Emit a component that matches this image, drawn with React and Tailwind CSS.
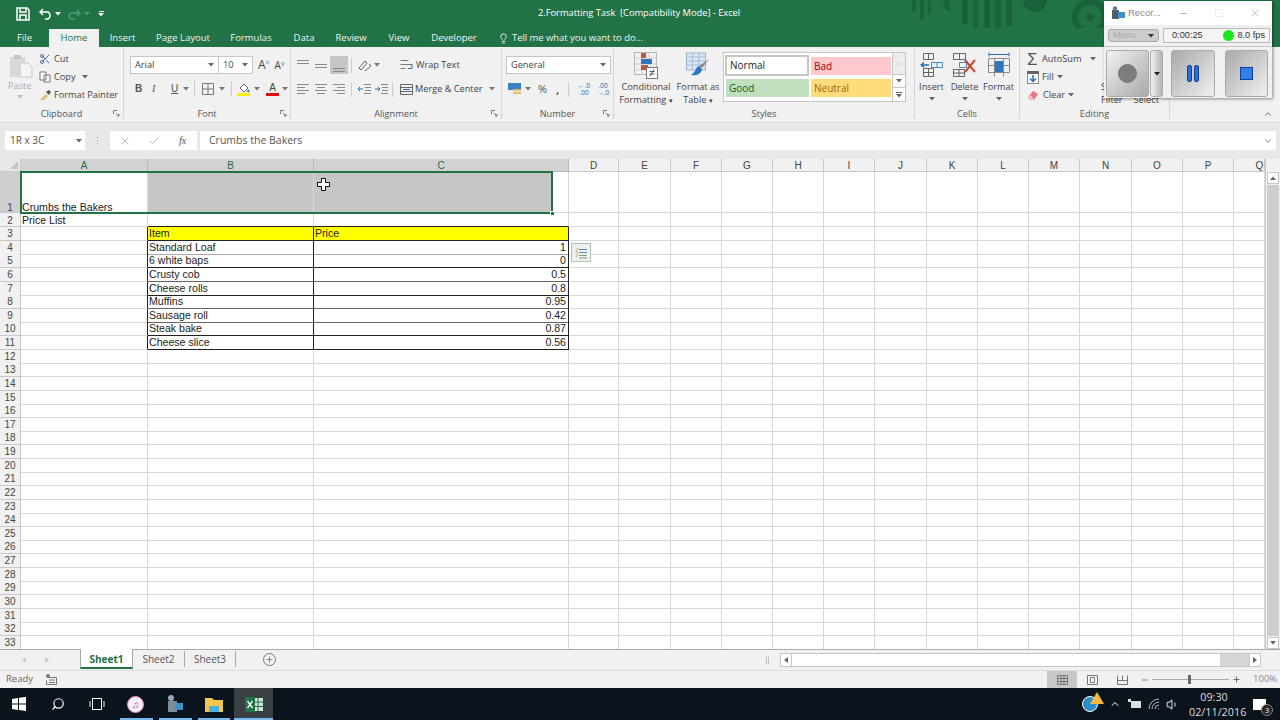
import React from 'react';
import { ChevronDown, ChevronUp, Check, X, Scissors, Search, Lightbulb, Plus, Minus, Volume1 } from 'lucide-react';

const cols = 'grid grid-cols-[21px_127px_166px_255px_50px_52px_51px_51px_51px_51px_52px_51px_51px_51px_52px_51px_51px_31px]';
const letters = ['A', 'B', 'C', 'D', 'E', 'F', 'G', 'H', 'I', 'J', 'K', 'L', 'M', 'N', 'O', 'P', 'Q'];

const table = {
  3: { b: 'Item', c: 'Price', line: 'border-b-[#222]', yellow: true },
  4: { b: 'Standard Loaf', c: '1', line: 'border-b-[#aaa]' },
  5: { b: '6 white baps', c: '0', line: 'border-b-[#222]' },
  6: { b: 'Crusty cob', c: '0.5', line: 'border-b-[#666]' },
  7: { b: 'Cheese rolls', c: '0.8', line: 'border-b-[#222]' },
  8: { b: 'Muffins', c: '0.95', line: 'border-b-[#666]' },
  9: { b: 'Sausage roll', c: '0.42', line: 'border-b-[#666]' },
  10: { b: 'Steak bake', c: '0.87', line: 'border-b-[#222]' },
  11: { b: 'Cheese slice', c: '0.56', line: 'border-b-[#222]' },
};

const Caret = ({ className = 'ml-1 text-[#666]' }) => (
  <svg width="6" height="4" viewBox="0 0 6 4" className={className}><path d="M0 0h6L3 3.5z" fill="currentColor" /></svg>
);

const Lines = ({ rows }) => (
  <svg width="14" height="12" viewBox="0 0 14 12" stroke="#8a8a8a" strokeWidth="1">
    {rows.map(([a, b, y]) => <path key={y} d={`M${a} ${y}H${b}`} />)}
  </svg>
);

const Combo = ({ className, text }) => (
  <div className={`h-[18px] bg-white border border-[#c6c6c6] flex items-center justify-between pl-1 pr-1 text-[9.2px] text-[#444] ${className}`}>
    <span>{text}</span>
    <Caret className="text-[#666]" />
  </div>
);

const Group = ({ className, label, launcher, children }) => (
  <div className={`relative shrink-0 h-[71px] border-r border-[#d4d4d4] flex flex-col ${className}`}>
    <div className="h-[60px] min-h-[60px]">{children}</div>
    <div className="text-center text-[9.2px] text-[#555] leading-[12px]">{label}</div>
    {launcher && (
      <svg width="7" height="7" viewBox="0 0 7 7" className="absolute right-[3px] bottom-[2px]" stroke="#777" fill="none">
        <path d="M.5 4V.5H4M3 3l3 3M6 4v2H4" />
      </svg>
    )}
  </div>
);

const ClipIcon = () => (
  <svg width="24" height="24" viewBox="0 0 24 24">
    <rect x="1" y="3" width="15" height="20" fill="#d9d9d9" />
    <rect x="5" y="1" width="7" height="4" fill="#c4c4c4" />
    <path d="M11 9h8l4 4v10H11z" fill="#f4f4f4" stroke="#c8c8c8" />
  </svg>
);

const TallIcon = ({ children }) => <div className="h-[27px] flex items-start justify-center">{children}</div>;

const InsertIcon = () => (
  <svg width="24" height="25" viewBox="0 0 24 25" fill="none" stroke="#666">
    <path d="M3.5 1.5h10v6h-10zM8.5 1.5v6M3.5 16.5h10v8h-10zM3.5 20.5h10M8.5 16.5v8" />
    <path d="M11.5 10.5h11v5h-11zM17 10.5v5" stroke="#4a86c5" />
    <path d="M9 13H1M4 10.5 1 13l3 2.5" stroke="#2a6fb5" strokeWidth="1.4" />
  </svg>
);

const DeleteIcon = () => (
  <svg width="25" height="25" viewBox="0 0 25 25" fill="none" stroke="#666">
    <path d="M1.5 1.5h12v6h-12zM7.5 1.5v6M1.5 17.5h11v7h-11zM1.5 21h11M7 17.5v7" />
    <path d="M7.5 10.5h7v5h-7z" stroke="#4a86c5" />
    <path d="M13 8l10 12M23 8 13 20" stroke="#c8462c" strokeWidth="2" />
  </svg>
);

const FormatIcon = () => (
  <svg width="24" height="26" viewBox="0 0 24 26" fill="none" stroke="#8a8a8a">
    <path d="M1.500 6.500h21v14h-21zM7.500 6.500v18M16.500 6.500v18M1.500 13.500h21" />
    <rect x="8" y="9" width="8" height="11" fill="#2f75bd" stroke="none" />
    <path d="M2 2.500h20M2 .5v4M22 .5v4" stroke="#2a6fb5" />
  </svg>
);

const CondIcon = () => (
  <svg width="24" height="28" viewBox="0 0 24 28" fill="none">
    <rect x=".5" y=".5" width="22" height="22" stroke="#b5b5b5" />
    <path d="M.5 6h22M.5 12h22M.5 18h22M8 .5v22M15 .5v22" stroke="#cfcfcf" />
    <rect x="7" y="1" width="5" height="5" fill="#c0573a" />
    <rect x="7" y="7" width="11" height="5" fill="#2f75bd" />
    <rect x="7" y="13" width="7" height="5" fill="#c0573a" />
    <rect x="12.500" y="15.500" width="11" height="11" fill="#fff" stroke="#777" />
    <path d="M15.500 19.500h5M15.500 22h5M20 17.500l-4 7" stroke="#555" />
  </svg>
);

const TableIcon = () => (
  <svg width="24" height="26" viewBox="0 0 24 26" fill="none">
    <rect x=".5" y="1" width="19" height="17" fill="#dbe7f5" stroke="#9ab2cf" />
    <path d="M.5 5h19M.5 9h19M.5 13h19M6.500 1v17M13 1v17" stroke="#a9bdd6" />
    <path d="M23 7l-7 9-3-2z" fill="#8a8a8a" />
    <path d="M13 14c-4 2-3 6-8 9 6 1 10-1 11-6z" fill="#2f75bd" />
  </svg>
);

const RecorderWindow = () => (
  <div className="absolute left-[1104px] top-px w-[168px] h-[97px] bg-[#f0f0f0] shadow-[1px_1px_3px_rgba(0,0,0,.45)] font-['Liberation_Sans',sans-serif]">
    <div className="h-[24px] bg-white flex items-center pl-[8px]">
      <svg width="13" height="14" viewBox="0 0 13 14">
        <rect x="0" y="4" width="7" height="9" fill="#4b5f6d" />
        <rect x="6" y="6" width="7" height="6" fill="#3d8fc4" />
        <circle cx="3" cy="2.500" r="2.200" fill="#6b7880" />
      </svg>
      <span className="ml-[3px] text-[9.500px] text-[#888]">Recor...</span>
      <Minus size={9} className="ml-[18px] text-[#999]" />
      <div className="ml-[27px] w-[8px] h-[8px] border border-[#eee]" />
      <X size={12} strokeWidth={1} className="ml-[26px] text-[#888]" />
    </div>
    <div className="h-[22px] flex items-center pl-[4px] gap-[4px] border-b border-[#c8c8c8]">
      <div className="w-[51px] h-[13px] rounded-[3px] bg-[#cdcdcd] border border-[#aaa] flex items-center justify-between px-[4px]">
        <span className="text-[9px] text-[#aaa]">Menu</span>
        <Caret className="text-[#333]" />
      </div>
      <div className="w-[107px] h-[15px] border border-[#bbb] bg-[#f5f5f5] flex items-center justify-between pl-[8px] pr-[4px] text-[9.200px] text-[#333]">
        <span>0:00:25</span>
        <span className="flex items-center gap-[3px]"><span className="w-[11px] h-[11px] rounded-full bg-[#19e81b]" />8.0 fps</span>
      </div>
    </div>
    <div className="flex items-start pl-[2px] pt-[3px]">
      <div className="w-[43px] h-[47px] rounded-[3px] border border-[#aaa] bg-gradient-to-br from-[#f2f2f2] to-[#a9a9a9] flex items-center justify-center">
        <div className="w-[19px] h-[19px] rounded-full bg-[#7d7d7d] border border-[#777]" />
      </div>
      <div className="ml-[1px] w-[13px] h-[47px] rounded-[3px] border border-[#aaa] bg-gradient-to-r from-[#f2f2f2] to-[#b4b4b4] flex items-center justify-center">
        <Caret className="text-[#222]" />
      </div>
      <div className="ml-[8px] w-[44px] h-[47px] rounded-[3px] border border-[#aaa] bg-gradient-to-br from-[#aaaaaa] to-[#f0f0f0] flex items-center justify-center gap-[2px]">
        <span className="w-[5px] h-[17px] rounded-[2px] bg-[#2b6fdc] border border-[#133f8c]" />
        <span className="w-[5px] h-[17px] rounded-[2px] bg-[#2b6fdc] border border-[#133f8c]" />
      </div>
      <div className="ml-[10px] w-[43px] h-[47px] rounded-[3px] border border-[#aaa] bg-gradient-to-br from-[#aaaaaa] to-[#f0f0f0] flex items-center justify-center">
        <span className="w-[13px] h-[13px] bg-[#2f80ea] border border-[#133f8c]" />
      </div>
    </div>
  </div>
);

const Ribbon = () => (
  <div className="h-[75px] bg-[#f1f1f1] flex pt-[1px] text-[#444] font-['Open_Sans',sans-serif]">
    <Group className="w-[124px]" label="Clipboard" launcher>
      <div className="flex h-full">
        <div className="w-[39px] pl-[9px] pt-[6px] flex flex-col items-start">
          <ClipIcon />
          <span className="text-[9.200px] leading-[12px] text-[#aaa] mt-[2px] -ml-[1px]">Paste</span>
          <Caret className="text-[#bbb] ml-[8px] mt-[3px]" />
        </div>
        <div className="pt-[2px] flex flex-col">
          <div className="h-[18px] flex items-center gap-[3px] text-[9.200px]"><Scissors size={12} className="text-[#4a6f9c]" />Cut</div>
          <div className="h-[18px] flex items-center gap-[3px] text-[9.200px]">
            <svg width="12" height="12" viewBox="0 0 12 12" fill="none" stroke="#777"><path d="M1 1h6v8H1zM5 4h6v7H5z" fill="#fff" /></svg>
            Copy<Caret className="ml-[3px] text-[#666]" />
          </div>
          <div className="h-[18px] flex items-center gap-[2px] text-[9.200px] whitespace-nowrap">
            <svg width="13" height="12" viewBox="0 0 13 12"><path d="M1 11 7 5l2 2-4 4z" fill="#e3b86a" /><path d="M7 3l3-2 2 2-2 3z" fill="#555" /></svg>
            Format Painter
          </div>
        </div>
      </div>
    </Group>

    <Group className="w-[167px]" label="Font" launcher>
      <div className="pl-[6px] pt-[8px]">
        <div className="flex items-center">
          <Combo className="w-[89px]" text="Arial" />
          <Combo className="w-[34px] border-l-0" text="10" />
          <span className="ml-[5px] text-[12px] leading-none">A<sup className="text-[7px] text-[#2a6fb5]">^</sup></span>
          <span className="ml-[5px] text-[10px] leading-none">A<sup className="text-[7px] text-[#2a6fb5]">v</sup></span>
        </div>
        <div className="flex items-center mt-[6px] h-[17px] pl-[5px] text-[10px] text-[#555] font-['Liberation_Sans',sans-serif]">
          <b className="w-[17px]">B</b>
          <i className="w-[19px] font-['Liberation_Serif',serif]">I</i>
          <u className="w-[12px]">U</u>
          <Caret className="text-[#777]" />
          <div className="w-px h-[15px] bg-[#ccc] ml-[5px]" />
          <svg width="12" height="12" viewBox="0 0 12 12" fill="none" stroke="#777" className="ml-[7px]"><path d="M.5.5h11v11H.500zM6 .5v11M.5 6h11" /></svg>
          <Caret className="text-[#777] ml-[5px]" />
          <div className="w-px h-[15px] bg-[#ccc] ml-[6px]" />
          <svg width="14" height="14" viewBox="0 0 14 14" className="ml-[5px]"><path d="M3 6l4-4 4 4-4 4z" fill="#fff" stroke="#666" /><path d="M11 7l2 3h-3z" fill="#2a6fb5" /><rect y="11" width="13" height="3" fill="#ffee00" /></svg>
          <Caret className="text-[#777] ml-[3px]" />
          <div className="ml-[6px] w-[13px] h-[14px] flex flex-col items-center justify-end leading-none">
            <span className="text-[10px] text-[#444] leading-[10px]">A</span>
            <span className="w-[13px] h-[3px] bg-[#e01010]" />
          </div>
          <Caret className="text-[#777] ml-[3px]" />
        </div>
      </div>
    </Group>

    <Group className="w-[211px]" label="Alignment" launcher>
      <div className="pl-[3px] pt-[8px]">
        <div className="flex items-center h-[18px]">
          <div className="w-[18px] flex justify-center"><Lines rows={[[1, 13, 1.5], [1, 13, 4.5]]} /></div>
          <div className="w-[18px] flex justify-center"><Lines rows={[[1, 13, 5.5], [1, 13, 8.5]]} /></div>
          <div className="w-[18px] h-[18px] bg-[#c6c6c6] flex items-end justify-center pb-[1px]"><Lines rows={[[1, 13, 7.5], [1, 13, 10.5]]} /></div>
          <div className="w-px h-[15px] bg-[#ccc] ml-[3px]" />
          <svg width="14" height="13" viewBox="0 0 14 13" fill="none" stroke="#666" className="ml-[6px]"><path d="M1 9l6-7 2 2-6 7zM7 12l6-5M11 5l2 2" /></svg>
          <Caret className="text-[#777] ml-[2px]" />
          <svg width="13" height="13" viewBox="0 0 13 13" fill="none" stroke="#777" className="ml-[20px]"><path d="M.5 1.500h8M.5 5.500h11M.5 9.500h5" /><path d="M10 5.500h2v4H8" stroke="#2a6fb5" /></svg>
          <span className="ml-[3px] text-[9.200px]">Wrap Text</span>
        </div>
        <div className="flex items-center h-[16px] mt-[7px]">
          <div className="w-[18px] flex justify-center"><Lines rows={[[1, 13, 1.5], [1, 9, 4.5], [1, 13, 7.5], [1, 9, 10.5]]} /></div>
          <div className="w-[18px] flex justify-center"><Lines rows={[[1, 13, 1.5], [3, 11, 4.5], [1, 13, 7.5], [3, 11, 10.5]]} /></div>
          <div className="w-[18px] flex justify-center"><Lines rows={[[1, 13, 1.5], [5, 13, 4.5], [1, 13, 7.5], [5, 13, 10.5]]} /></div>
          <div className="w-px h-[15px] bg-[#ccc] ml-[3px]" />
          <svg width="13" height="12" viewBox="0 0 13 12" fill="none" stroke="#888" className="ml-[6px]"><path d="M6 1.500h7M6 10.500h7M7 4.500h6M7 7.500h6" /><path d="M5 6H0M2 4 0 6l2 2" stroke="#2a6fb5" /></svg>
          <svg width="13" height="12" viewBox="0 0 13 12" fill="none" stroke="#888" className="ml-[4px]"><path d="M6 1.500h7M6 10.500h7M7 4.500h6M7 7.500h6" /><path d="M0 6h5M3 4l2 2-2 2" stroke="#2a6fb5" /></svg>
          <div className="w-px h-[15px] bg-[#ccc] ml-[4px]" />
          <svg width="13" height="13" viewBox="0 0 13 13" fill="none" stroke="#666" className="ml-[7px]"><path d="M.5 1.500h12v10H.500zM.5 4.500h12M.5 8.500h12" /><path d="M3 6.500h7" stroke="#2a6fb5" /></svg>
          <span className="ml-[2px] text-[9.200px] whitespace-nowrap">Merge &amp; Center</span>
          <Caret className="text-[#777] ml-[6px]" />
        </div>
      </div>
    </Group>

    <Group className="w-[112px]" label="Number" launcher>
      <div className="pl-[4px] pt-[8px]">
        <Combo className="w-[105px]" text="General" />
        <div className="flex items-center h-[16px] mt-[7px] pl-[2px] text-[#555]">
          <svg width="14" height="12" viewBox="0 0 14 12"><rect width="13" height="7" fill="#3b7fc4" /><rect x="5" y="6" width="8" height="2" fill="#e3b86a" /><rect x="5" y="9" width="8" height="2" fill="#e3b86a" /></svg>
          <Caret className="text-[#777] ml-[3px]" />
          <span className="ml-[7px] text-[11px]">%</span>
          <span className="ml-[9px] text-[11px] font-bold leading-none">,</span>
          <div className="w-px h-[15px] bg-[#ccc] ml-[9px]" />
          <span className="ml-[8px] text-[6.500px] leading-[7px] text-center text-[#2a6fb5] w-[14px] whitespace-nowrap">←.0<br />.00</span>
          <span className="ml-[5px] text-[6.500px] leading-[7px] text-center text-[#2a6fb5] w-[14px] whitespace-nowrap">.00<br />→.0</span>
        </div>
      </div>
    </Group>

    <Group className="w-[301px]" label="Styles">
      <div className="flex h-full text-[9.200px] text-center leading-[13px]">
        <div className="w-[54px] ml-[5px] pt-[4px]">
          <div className="flex justify-center h-[28px]"><CondIcon /></div>
          <div className="whitespace-nowrap">Conditional<br />Formatting <span className="text-[7px]">▾</span></div>
        </div>
        <div className="w-[50px] pt-[4px]">
          <div className="flex justify-center h-[28px]"><TableIcon /></div>
          <div className="whitespace-nowrap">Format as<br />Table <span className="text-[7px]">▾</span></div>
        </div>
        <div className="mt-[4px] w-[183px] h-[50px] bg-white border border-[#c6c6c6] flex text-left text-[10px] leading-[18px]">
          <div className="w-[169px] grid grid-cols-[84px_80px] content-start gap-y-[3px] pl-[1px] pt-[2px] gap-x-[2px]">
            <div className="h-[21px] border-2 border-[#c6c6c6] pl-[3px] leading-[17px] text-[#222]">Normal</div>
            <div className="h-[18px] mt-[2px] bg-[#ffc7ce] text-[#9c0006] pl-[3px]">Bad</div>
            <div className="h-[18px] ml-[1px] bg-[#bfdfbf] text-[#206020] pl-[3px]">Good</div>
            <div className="h-[18px] bg-[#ffdc7a] text-[#9c6500] pl-[3px]">Neutral</div>
          </div>
          <div className="ml-auto w-[13px] border-l border-[#c6c6c6] flex flex-col items-center text-[#666]">
            <div className="h-[21px] w-full bg-[#ececec] flex items-center justify-center"><ChevronUp size={8} className="text-[#bbb]" /></div>
            <div className="h-[14px] w-full border-y border-[#c6c6c6] flex items-center justify-center"><Caret className="text-[#666]" /></div>
            <div className="flex-1 flex flex-col items-center justify-center gap-px"><span className="w-[6px] h-px bg-[#666]" /><Caret className="text-[#666]" /></div>
          </div>
        </div>
      </div>
    </Group>

    <Group className="w-[105px]" label="Cells">
      <div className="flex pt-[4px] text-[9.200px] text-center leading-[13px]">
        <div className="w-[33px]"><TallIcon><InsertIcon /></TallIcon><div className="mt-[1px]">Insert</div><Caret className="mx-auto mt-[4px] text-[#666]" /></div>
        <div className="w-[33px]"><TallIcon><DeleteIcon /></TallIcon><div className="mt-[1px]">Delete</div><Caret className="mx-auto mt-[4px] text-[#666]" /></div>
        <div className="w-[35px]"><TallIcon><FormatIcon /></TallIcon><div className="mt-[1px]">Format</div><Caret className="mx-auto mt-[4px] text-[#666]" /></div>
      </div>
    </Group>

    <Group className="w-[150px]" label="Editing">
      <div className="relative pl-[7px] pt-[2px] flex flex-col text-[9.200px]">
        <div className="h-[18px] flex items-center gap-[3px]"><span className="w-[12px] text-[17px] leading-none text-[#555] font-['Liberation_Sans',sans-serif]">Σ</span>AutoSum<Caret className="ml-[6px] text-[#666]" /></div>
        <div className="h-[18px] flex items-center gap-[3px]">
          <svg width="12" height="13" viewBox="0 0 12 13"><rect x=".5" y=".5" width="11" height="12" fill="#fff" stroke="#888" /><rect width="12" height="3" fill="#666" /><path d="M6 4v6M3 7.500 6 10.500l3-3" fill="none" stroke="#2a6fb5" strokeWidth="1.500" /></svg>
          Fill<Caret className="text-[#666]" />
        </div>
        <div className="h-[18px] flex items-center gap-[3px]">
          <svg width="13" height="12" viewBox="0 0 13 12"><path d="M1 8l5-6 5 3-4 6H3z" fill="#e8767e" /><path d="M1 8l3 3h3L4 6z" fill="#f3c3c6" /></svg>
          Clear<Caret className="text-[#666]" />
        </div>
        <span className="absolute left-[81px] top-[32px]">S</span>
        <div className="absolute left-[81px] top-[45px] flex gap-[11px] whitespace-nowrap"><span>Filter</span><span>Select</span></div>
      </div>
    </Group>

    <div className="flex-1 relative"><ChevronUp size={10} className="absolute right-[7px] bottom-[3px] text-[#555]" /></div>
  </div>
);

const FormulaBar = () => (
  <div className="h-[37px] bg-[#e8e8e8] pt-[8px] flex items-start text-[10px] text-[#555] font-['Open_Sans',sans-serif] border-t border-[#dadada]">
    <div className="ml-[5px] w-[80px] h-[19px] bg-white flex items-center justify-between pl-[5px] pr-[3px]"><span>1R x 3C</span><Caret className="text-[#666]" /></div>
    <div className="w-[25px] h-[19px] flex flex-col items-center justify-center gap-[2px]">
      <span className="w-[1px] h-[1px] bg-[#999]" /><span className="w-[1px] h-[1px] bg-[#999]" /><span className="w-[1px] h-[1px] bg-[#999]" />
    </div>
    <div className="w-[87px] h-[19px] bg-white flex items-center pl-[9px]">
      <X size={12} className="text-[#bbb]" />
      <Check size={12} className="ml-[17px] text-[#bbb]" />
      <span className="ml-[19px] text-[10px] italic font-['Liberation_Serif',serif] text-[#555]">fx</span>
    </div>
    <div className="ml-[3px] w-[1076px] h-[19px] bg-white flex items-center justify-between pl-[9px] pr-[3px] text-[10.500px]">
      <span>Crumbs the Bakers</span>
      <ChevronDown size={10} className="text-[#666]" />
    </div>
  </div>
);

const Row = ({ n, h, selected }) => {
  const row = table[n];
  const gridLine = 'border-r border-b border-[#d9d9d9]';
  return (
    <div className={`${cols} ${h}`}>
      <div className={`flex items-end justify-center text-[10px] text-[#444] border-r border-b border-[#c9c9c9] ${selected ? 'bg-[#cfcfcf] text-[#1f6b45]' : 'bg-[#f1f1f1]'}`}>
        <span className={n === 1 ? 'translate-y-[2px]' : n === 2 ? 'translate-y-px' : ''}>{n}</span>
      </div>
      <div className={`${gridLine} ${row ? 'border-r-[#222]' : ''} flex items-end pl-px`}>
        {n === 1 && <span className="translate-y-[2px]">Crumbs the Bakers</span>}
        {n === 2 && <span className="translate-y-px">Price List</span>}
      </div>
      <div className={`${gridLine} ${row ? `border-r-[#222] ${row.line}` : ''} ${n === 2 ? 'border-b-[#222]' : ''} ${n === 1 ? 'bg-[#c6c6c6]' : ''} ${row?.yellow ? 'bg-[#ffff00]' : ''} flex items-end pl-px`}>
        {row?.b}
      </div>
      <div className={`${gridLine} ${row ? `border-r-[#222] ${row.line}` : ''} ${n === 2 ? 'border-b-[#222]' : ''} ${row?.yellow ? 'bg-[#ffff00]' : ''} flex items-end ${row?.yellow ? 'pl-px' : 'justify-end pr-[2px]'}`}>
        {n === 1 ? <div className="w-[238px] h-full mr-auto bg-[#c6c6c6]" /> : row?.c}
      </div>
      {letters.slice(3).map((l) => <div key={l} className={gridLine} />)}
    </div>
  );
};

const Sheet = () => (
  <div className="h-[490px] flex font-['Liberation_Sans',sans-serif] text-[10.600px] leading-[13px] text-[#222] bg-white">
    <div className="relative w-[1265px] overflow-hidden">
      <div className={`${cols} h-[13px]`}>
        <div className="bg-[#e8e8e8] border-r border-b border-[#c9c9c9] flex items-end justify-end p-[2px]">
          <svg width="8" height="8" viewBox="0 0 8 8"><path d="M8 0v8H0z" fill="#c4c4c4" /></svg>
        </div>
        {letters.map((l, i) => (
          <div key={l} className={`border-r border-[#b9b9b9] text-[10px] text-center overflow-hidden ${i < 3 ? 'bg-[#d2d2d2] text-[#1f6b45] border-b border-[#217346]' : 'bg-[#f1f1f1] text-[#444] border-b border-[#c9c9c9]'}`}>
            <div className={l === 'Q' ? 'w-[51px]' : ''}>{l}</div>
          </div>
        ))}
      </div>
      <Row n={1} h="h-[41px]" selected />
      <Row n={2} h="h-[14px]" />
      {Array.from({ length: 31 }, (_, i) => <Row key={i} n={i + 3} h="h-[13.630px]" />)}

      {/* selection box over B1:C1 */}
      <div className="absolute left-[20px] top-[12px] w-[533px] h-[43px] border-2 border-[#217346]" />
      <div className="absolute left-[550px] top-[52px] w-[5px] h-[5px] bg-[#217346] border border-white" />
      <svg width="13" height="13" viewBox="0 0 13 13" className="absolute left-[317px] top-[19px]">
        <path d="M4.500.5h4v4h4v4h-4v4h-4v-4h-4v-4h4z" fill="#fff" stroke="#111" />
      </svg>
      <div className="absolute left-[571px] top-[84px] w-[20px] h-[19px] bg-[#eef2ee] border border-[#b5c0b5] flex items-center justify-center">
        <svg width="12" height="12" viewBox="0 0 12 12" fill="none"><path d="M4 2.500h8M4 5.500h8" stroke="#5b87b5" /><path d="M4 8.500h8M4 11h8" stroke="#7f9f7f" /><path d="M3 1 1 4l2 3-2 3" stroke="#d0a050" /></svg>
      </div>
    </div>
    <div className="w-[15px] bg-[#f1f1f1] flex flex-col border-l border-[#c9c9c9]">
      <div className="h-[13px] bg-[#f1f1f1]" />
      <div className="h-[12px] mx-[1px] bg-white border border-[#c6c6c6] flex items-center justify-center"><svg width="6" height="4" viewBox="0 0 6 4"><path d="M0 4h6L3 .5z" fill="#666" /></svg></div>
      <div className="flex-1 mx-[1px] my-[1px] bg-[#cdcdcd]" />
      <div className="h-[12px] mx-[1px] bg-white border border-[#c6c6c6] flex items-center justify-center"><Caret className="text-[#666]" /></div>
    </div>
  </div>
);

const SheetTabs = () => (
  <div className="h-[21px] bg-[#f1f1f1] border-t border-[#aaa] flex items-start text-[10px] text-[#555] font-['Open_Sans',sans-serif]">
    <div className="w-[80px] h-full flex items-center pl-[22px] gap-[19px] text-[#ccc]">
      <svg width="4" height="6" viewBox="0 0 4 6"><path d="M4 0v6L0 3z" fill="currentColor" /></svg>
      <svg width="4" height="6" viewBox="0 0 4 6"><path d="M0 0v6l4-3z" fill="currentColor" /></svg>
    </div>
    <div className="w-[53px] h-[20px] -mt-px pt-[2px] bg-white border-x border-[#aaa] border-b-2 border-b-[#217346] text-[#217346] font-bold flex items-center justify-center">Sheet1</div>
    <div className="w-[52px] h-[16px] mt-[1px] border-r border-[#aaa] flex items-center justify-center">Sheet2</div>
    <div className="w-[51px] h-[16px] mt-[1px] border-r border-[#aaa] flex items-center justify-center">Sheet3</div>
    <div className="ml-[27px] mt-[3px] w-[13px] h-[13px] rounded-full border border-[#777] flex items-center justify-center"><Plus size={9} className="text-[#666]" /></div>
    <div className="ml-[490px] mt-[7px] w-[3px] h-[7px] border-x border-dotted border-[#999]" />
    <div className="ml-[11px] mt-[3px] w-[481px] h-[14px] bg-[#d6d6d6] flex items-stretch border border-[#c6c6c6]">
      <div className="w-[11px] bg-white flex items-center justify-center border-r border-[#c6c6c6]"><svg width="4" height="6" viewBox="0 0 4 6"><path d="M4 0v6L0 3z" fill="#666" /></svg></div>
      <div className="w-[428px] bg-white" />
      <div className="flex-1" />
      <div className="w-[11px] bg-white flex items-center justify-center border-l border-[#c6c6c6]"><svg width="4" height="6" viewBox="0 0 4 6"><path d="M0 0v6l4-3z" fill="#666" /></svg></div>
    </div>
  </div>
);

const StatusBar = () => (
  <div className="h-[18px] bg-[#f1f1f1] border-t border-[#dcdcdc] flex items-center text-[9.500px] text-[#666] font-['Open_Sans',sans-serif]">
    <span className="ml-[6px]">Ready</span>
    <svg width="11" height="11" viewBox="0 0 11 11" fill="none" stroke="#777" className="ml-[13px]"><path d="M3 3.500h7.500v7H.500v-4" /><path d="M3 6h6M3 8.500h6" /><circle cx="2" cy="2" r="1.500" fill="#777" /></svg>
    <div className="ml-[990px] w-[30px] h-full bg-[#c8c8c8] flex items-center justify-center">
      <svg width="11" height="10" viewBox="0 0 11 10" fill="none" stroke="#777"><path d="M.5.5h10v9H.500zM.5 3.500h10M.5 6.500h10M4 .5v9M7 .5v9" /></svg>
    </div>
    <div className="w-[30px] h-full flex items-center justify-center">
      <svg width="11" height="10" viewBox="0 0 11 10" fill="none" stroke="#777"><path d="M.5.5h10v9H.500zM3.500 2.500h4v5h-4z" /></svg>
    </div>
    <div className="w-[31px] h-full flex items-center justify-center">
      <svg width="11" height="10" viewBox="0 0 11 10" fill="none" stroke="#777"><path d="M.5.500v9h10v-9M5.500.500v5M.5 5.500h10" /></svg>
    </div>
    <Minus size={8} className="ml-[3px] text-[#444]" />
    <div className="relative ml-[3px] w-[77px] h-px bg-[#aaa]">
      <span className="absolute left-[36px] -top-[4px] w-[3px] h-[9px] bg-[#666]" />
    </div>
    <Plus size={9} className="ml-[3px] text-[#444]" />
    <span className="ml-[12px] text-[#888]">100%</span>
  </div>
);

const Taskbar = () => (
  <div className="h-[32px] bg-[#0b131c] flex items-stretch text-white font-['Open_Sans',sans-serif]">
    <div className="w-[38px] flex items-center justify-center">
      <svg width="14" height="14" viewBox="0 0 14 14" fill="#fff"><path d="M0 2l6-1v5.500H0zM7 .8 14 0v6.500H7zM0 7.500h6V13l-6-1zM7 7.500h7V14l-7-1z" /></svg>
    </div>
    <div className="w-[39px] flex items-center justify-center"><Search size={14} className="-scale-x-100" /></div>
    <div className="w-[39px] flex items-center justify-center">
      <svg width="16" height="12" viewBox="0 0 16 12" fill="none" stroke="#fff"><path d="M3.500.5h9v11h-9zM1 3v6M15 3v6" /></svg>
    </div>
    <div className="w-[39px] flex items-center justify-center relative">
      <span className="w-[17px] h-[17px] rounded-full bg-[#f3eef5] border border-[#e58ab5] flex items-center justify-center text-[10px] text-[#b04fc0]">♫</span>
      <span className="absolute bottom-0 left-[4px] right-[2px] h-[2px] bg-[#76b9ed]" />
    </div>
    <div className="w-[39px] flex items-center justify-center relative">
      <svg width="16" height="18" viewBox="0 0 16 18"><rect x="1" y="6" width="9" height="11" fill="#7b8d99" /><rect x="8" y="8" width="8" height="7" fill="#3d8fc4" /><circle cx="4" cy="3" r="3" fill="#9aa7b0" /></svg>
      <span className="absolute bottom-0 left-[4px] right-[2px] h-[2px] bg-[#76b9ed]" />
    </div>
    <div className="w-[40px] flex items-center justify-center relative">
      <svg width="18" height="15" viewBox="0 0 18 15"><path d="M0 1h7l2 2h9v12H0z" fill="#f5c84b" /><rect x="4" y="9" width="10" height="6" fill="#49b1e6" /></svg>
      <span className="absolute bottom-0 left-[4px] right-[4px] h-[2px] bg-[#76b9ed]" />
    </div>
    <div className="w-[39px] bg-[#3a3f44] flex items-center justify-center relative">
      <svg width="18" height="15" viewBox="0 0 18 15"><rect x="8" y="1" width="10" height="13" fill="#cfe6d6" /><path d="M13 1v13M8 5h10M8 9.500h10" stroke="#217346" /><rect width="10" height="15" fill="#217346" /><path d="M2.500 4l5 7M7.500 4l-5 7" stroke="#fff" strokeWidth="1.300" /></svg>
      <span className="absolute bottom-0 left-0 right-0 h-[2px] bg-[#76b9ed]" />
    </div>

    <div className="flex-1 flex items-center justify-end">
      <div className="relative w-[16px] h-[16px] rounded-full bg-[#2a8cc8] border border-white mr-[11px]">
        <svg width="14" height="12" viewBox="0 0 14 12" className="absolute -top-[5px] left-[7px]"><path d="M7 0l7 12H0z" fill="#f5b942" /></svg>
      </div>
      <ChevronUp size={12} className="mr-[7px]" />
      <svg width="13" height="10" viewBox="0 0 13 10" fill="#ddd" className="mr-[7px]"><rect x="3" y="2" width="10" height="7" /><rect width="3" height="3" /></svg>
      <svg width="13" height="12" viewBox="0 0 13 12" fill="none" stroke="#bbb" className="mr-[5px]"><path d="M1 11a10 10 0 0 1 10-10M4 11a7 7 0 0 1 7-7M7 11a4 4 0 0 1 4-4M10 11h1" /></svg>
      <Volume1 size={13} className="text-[#ccc]" />
      <div className="ml-[10px] w-[50px] text-center text-[10.800px] leading-[15px] text-[#ddd] whitespace-nowrap">09:30<br />02/11/2016</div>
      <div className="relative ml-[14px] mr-[14px] w-[13px] h-[11px] bg-white">
        <span className="absolute -right-[7px] -bottom-[6px] w-[12px] h-[12px] rounded-full bg-[#222] border border-[#888] text-[8px] leading-[10px] text-center">3</span>
      </div>
    </div>
  </div>
);

export default function App() {
  return (
    <div className="relative w-[1280px] h-[720px] overflow-hidden bg-white">
      <div className="relative h-[28px] bg-[#217346] flex items-center text-white overflow-hidden font-['Open_Sans',sans-serif]">
        <svg width="14" height="14" viewBox="0 0 14 14" className="ml-[16px]" fill="none" stroke="#fff" strokeWidth="1.500"><path d="M1 1h10l2 2v10H1z" /><path d="M4 1v4h6V1M4 13V8h6v5" /></svg>
        <svg width="14" height="12" viewBox="0 0 14 12" className="ml-[9px]" fill="none" stroke="#fff" strokeWidth="1.500"><path d="M1 4h8a4 4 0 0 1 0 7H6M4 1 1 4l3 3" /></svg>
        <Caret className="ml-[2px] text-white" />
        <svg width="13" height="11" viewBox="0 0 13 11" className="ml-[7px]" fill="none" stroke="#4c9a75" strokeWidth="1.500"><path d="M12 4H4a3 3 0 0 0 0 6h3M9 1l3 3-3 3" /></svg>
        <Caret className="ml-[3px] text-[#4c9a75]" />
        <div className="ml-[8px] flex flex-col items-center gap-px"><span className="w-[5px] h-px bg-white" /><Caret className="ml-0 text-white" /></div>
        <span className="absolute left-[538px] top-[6px] text-[9.400px] tracking-[-0.05px] whitespace-pre">2.Formatting Task  [Compatibility Mode] - Excel</span>
        <svg width="210" height="28" viewBox="0 0 210 28" className="absolute left-[910px] top-0" fill="#1a6239">
          <path d="M2 0h4v12H2zM10 0h4v20h-4zM18 0h3v14h-3zM33 0h5l3 12-6-3zM52 0h6v24h-6zM63 0h5v30h-5zM74 0h6v30h-6zM85 0h6v30h-6zM96 0h6v26h-6z" />
          <circle cx="125" cy="0" r="12" />
          <circle cx="180" cy="17" r="15" fill="none" stroke="#1a6239" strokeWidth="6" />
          <circle cx="180" cy="17" r="4" />
        </svg>
      </div>

      <div className="h-[19px] bg-[#217346] flex items-stretch pt-px text-[9.500px] text-[#f2f2f2] font-['Open_Sans',sans-serif]">
        <div className="w-[49px] flex items-center justify-center">File</div>
        <div className="w-[50px] bg-[#f1f1f1] text-[#217346] flex items-center justify-center">Home</div>
        <div className="w-[47px] flex items-center justify-center">Insert</div>
        <div className="w-[74px] flex items-center justify-center whitespace-nowrap">Page Layout</div>
        <div className="w-[62px] flex items-center justify-center">Formulas</div>
        <div className="w-[44px] flex items-center justify-center">Data</div>
        <div className="w-[50px] flex items-center justify-center">Review</div>
        <div className="w-[46px] flex items-center justify-center">View</div>
        <div className="w-[64px] flex items-center justify-center">Developer</div>
        <div className="ml-[12px] flex items-center gap-[3px] whitespace-nowrap tracking-[-0.05px]"><Lightbulb size={11} />Tell me what you want to do...</div>
      </div>

      <Ribbon />
      <FormulaBar />
      <Sheet />
      <SheetTabs />
      <StatusBar />
      <Taskbar />
      <RecorderWindow />
    </div>
  );
}
